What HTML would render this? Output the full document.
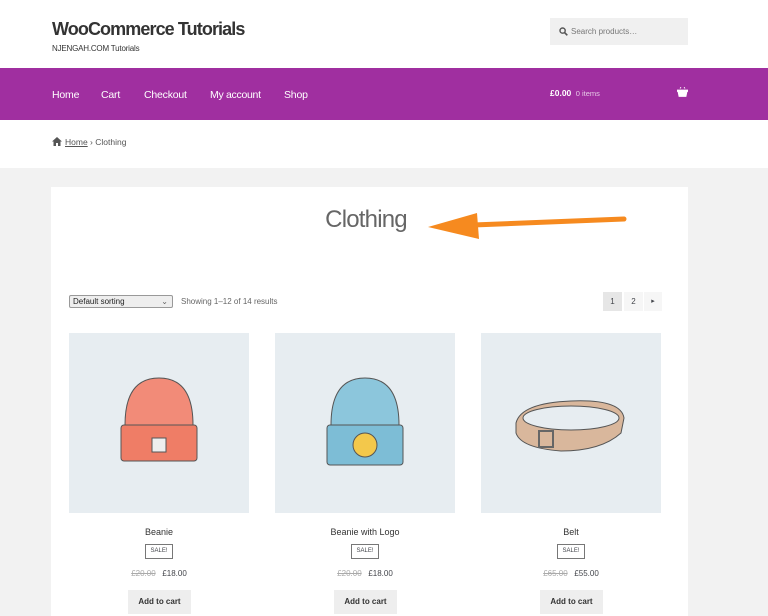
<!DOCTYPE html>
<html><head><meta charset="utf-8"><style>
*{margin:0;padding:0;box-sizing:border-box}
body{width:768px;height:616px;overflow:hidden;background:#f2f2f2;font-family:"Liberation Sans",sans-serif;color:#43454b;position:relative}
.a{position:absolute}
</style></head><body>
<div class="a" style="left:0;top:0;width:768px;height:68px;background:#fff"></div>
<div class="a" style="left:52px;top:19px;font-size:18px;font-weight:bold;color:#333;letter-spacing:-0.9px">WooCommerce Tutorials</div>
<div class="a" style="left:52px;top:44px;font-size:8px;color:#333;letter-spacing:-0.2px">NJENGAH.COM Tutorials</div>
<div class="a" style="left:550px;top:18px;width:138px;height:27px;background:#f0f0f0"></div>
<svg class="a" style="left:559px;top:27px" width="9" height="9" viewBox="0 0 9 9"><circle cx="3.6" cy="3.6" r="2.6" fill="none" stroke="#555" stroke-width="1.4"/><path d="M5.5 5.5L8.3 8.3" stroke="#555" stroke-width="1.6"/></svg>
<div class="a" style="left:571px;top:27px;font-size:8px;color:#777">Search products…</div>
<div class="a" style="left:0;top:68px;width:768px;height:52px;background:#a02fa0"></div>
<div class="a" style="left:52px;top:89px;font-size:10.5px;color:#fff;letter-spacing:-0.2px">Home</div>
<div class="a" style="left:101px;top:89px;font-size:10.5px;color:#fff;letter-spacing:-0.2px">Cart</div>
<div class="a" style="left:144px;top:89px;font-size:10.5px;color:#fff;letter-spacing:-0.2px">Checkout</div>
<div class="a" style="left:210px;top:89px;font-size:10.5px;color:#fff;letter-spacing:-0.3px">My account</div>
<div class="a" style="left:284px;top:89px;font-size:10.5px;color:#fff;letter-spacing:-0.2px">Shop</div>
<div class="a" style="left:550px;top:88px;font-size:8.5px;color:#fff;font-weight:bold">£0.00 <span style="font-weight:normal;font-size:7.5px;color:#e6c8e6">&nbsp;0 items</span></div>
<svg class="a" style="left:677px;top:87px" width="11" height="10" viewBox="0 0 11 10"><path d="M0 3h11v1.5h-1L9 9.5H2L1 4.5H0z M3 1.5L4 0M8 1.5L7 0" fill="#fff" stroke="#fff" stroke-width="0.8"/></svg>
<div class="a" style="left:0;top:120px;width:768px;height:48px;background:#fff"></div>
<svg class="a" style="left:52px;top:137px" width="10" height="9" viewBox="0 0 10 9"><path d="M5 0L10 4.5H8.5V9H6V6H4V9H1.5V4.5H0z" fill="#555"/></svg>
<div class="a" style="left:65px;top:137px;font-size:8.5px;color:#555"><span style="text-decoration:underline">Home</span> › Clothing</div>
<div class="a" style="left:51px;top:187px;width:637px;height:429px;background:#fff"></div>
<div class="a" style="left:0;top:206px;width:732px;text-align:center;font-size:24px;color:#666;letter-spacing:-0.8px">Clothing</div>
<svg class="a" style="left:425px;top:208px" width="205" height="32" viewBox="0 0 205 32"><path d="M199 11L48 17" stroke="#f68a1f" stroke-width="5" stroke-linecap="round"/><path d="M3 19L52 5L54 31z" fill="#f68a1f"/></svg>
<div class="a" style="left:69px;top:295px;width:104px;height:13px;border:1px solid #999;border-radius:2px;background:#eee;font-size:8px;padding-left:3px;line-height:11px;color:#222">Default sorting<span style="position:absolute;right:4px;color:#666">⌄</span></div>
<div class="a" style="left:181px;top:297px;font-size:8px;color:#666">Showing 1–12 of 14 results</div>
<div class="a" style="left:603px;top:292px;width:19px;height:19px;background:#e6e6e6;font-size:8px;text-align:center;line-height:19px">1</div>
<div class="a" style="left:624px;top:292px;width:19px;height:19px;background:#f6f6f6;font-size:8px;text-align:center;line-height:19px">2</div>
<div class="a" style="left:644px;top:292px;width:18px;height:19px;background:#f6f6f6;font-size:7px;text-align:center;line-height:19px">▸</div>

<div class="a" style="left:69px;top:333px;width:180px;height:180px;background:#e7edf1"></div>
<svg class="a" style="left:69px;top:333px" width="180" height="180" viewBox="0 0 180 180"><path d="M56 92Q56 45 90 45Q124 45 124 92z" fill="#f28b78" stroke="#555" stroke-width="1"/><rect x="52" y="92" width="76" height="36" rx="3" fill="#ef7d66" stroke="#555"/><rect x="83" y="105" width="14" height="14" fill="#eee" stroke="#555"/></svg>
<div class="a" style="left:275px;top:333px;width:180px;height:180px;background:#e7edf1"></div>
<svg class="a" style="left:275px;top:333px" width="180" height="180" viewBox="0 0 180 180"><path d="M56 92Q56 45 90 45Q124 45 124 92z" fill="#8cc6dc" stroke="#555"/><rect x="52" y="92" width="76" height="40" rx="3" fill="#7dbdd6" stroke="#555"/><circle cx="90" cy="112" r="12" fill="#f3c84b" stroke="#555"/></svg>
<div class="a" style="left:481px;top:333px;width:180px;height:180px;background:#e7edf1"></div>
<svg class="a" style="left:481px;top:333px" width="180" height="180" viewBox="0 0 180 180"><path d="M35 90Q40 70 90 68Q140 66 143 85L140 100Q120 118 80 118Q40 115 35 100z" fill="#d9b79c" stroke="#555"/><ellipse cx="90" cy="85" rx="48" ry="12" fill="#e7edf1" stroke="#555"/><rect x="58" y="98" width="14" height="16" fill="none" stroke="#666" stroke-width="2"/></svg>

<div class="a" style="left:69px;top:527px;width:180px;text-align:center;font-size:9px;color:#333">Beanie</div>
<div class="a" style="left:275px;top:527px;width:180px;text-align:center;font-size:9px;color:#333">Beanie with Logo</div>
<div class="a" style="left:481px;top:527px;width:180px;text-align:center;font-size:9px;color:#333">Belt</div>
<div class="a" style="left:145px;top:544px;width:28px;height:15px;border:1px solid #777;font-size:6px;text-align:center;line-height:13px">SALE!</div>
<div class="a" style="left:351px;top:544px;width:28px;height:15px;border:1px solid #777;font-size:6px;text-align:center;line-height:13px">SALE!</div>
<div class="a" style="left:557px;top:544px;width:28px;height:15px;border:1px solid #777;font-size:6px;text-align:center;line-height:13px">SALE!</div>
<div class="a" style="left:69px;top:569px;width:180px;text-align:center;font-size:8px"><s style="color:#aaa">£20.00</s>&nbsp;&nbsp; £18.00</div>
<div class="a" style="left:275px;top:569px;width:180px;text-align:center;font-size:8px"><s style="color:#aaa">£20.00</s>&nbsp;&nbsp; £18.00</div>
<div class="a" style="left:481px;top:569px;width:180px;text-align:center;font-size:8px"><s style="color:#aaa">£65.00</s>&nbsp;&nbsp; £55.00</div>
<div class="a" style="left:128px;top:590px;width:63px;height:24px;background:#eee;font-size:8px;font-weight:bold;text-align:center;line-height:24px;color:#333">Add to cart</div>
<div class="a" style="left:334px;top:590px;width:63px;height:24px;background:#eee;font-size:8px;font-weight:bold;text-align:center;line-height:24px;color:#333">Add to cart</div>
<div class="a" style="left:540px;top:590px;width:63px;height:24px;background:#eee;font-size:8px;font-weight:bold;text-align:center;line-height:24px;color:#333">Add to cart</div>
</body></html>
